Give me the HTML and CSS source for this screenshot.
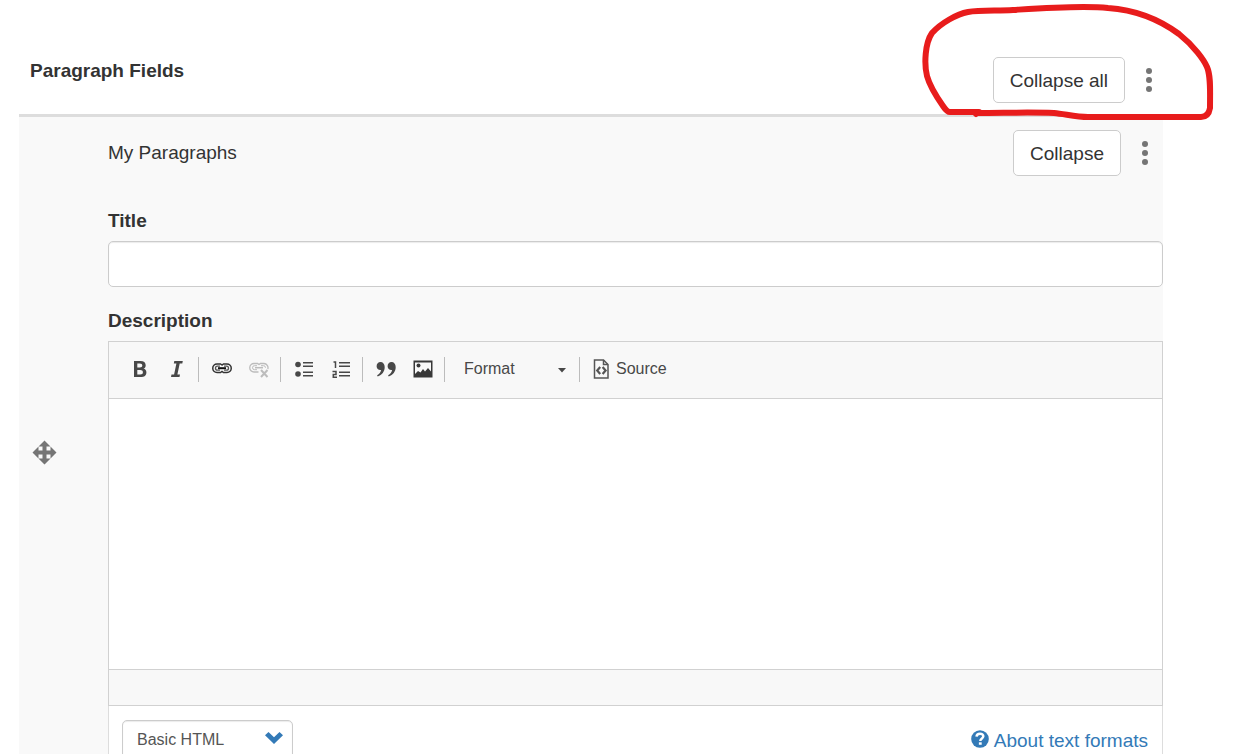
FILE: index.html
```html
<!DOCTYPE html>
<html lang="en">
<head>
    <meta charset="UTF-8">
    <meta name="viewport" content="width=device-width, initial-scale=1.0">
    <title>Paragraph Fields</title>
    <link rel="stylesheet" href="styles.css">
</head>
<body>
  <form class="page">
    <header class="field-header">
        <h4>Paragraph Fields</h4>
        <div class="actions">
            <button type="button" class="btn">Collapse all</button>
            <button type="button" class="more" aria-label="More actions">
                <svg width="8" height="26" viewBox="0 0 8 26" fill="#757575"><circle cx="4" cy="4" r="3"/><circle cx="4" cy="13" r="3"/><circle cx="4" cy="22" r="3"/></svg>
            </button>
        </div>
    </header>

    <section class="row">
        <a href="#" class="handle" aria-label="Drag to re-order">
            <svg width="25" height="25" viewBox="0 0 25 25">
                <path fill="#757575" fill-rule="evenodd" d="M12.500 0.500 24.500 12.500l-12 12-12-12zM6.500 6.500v4h4v-4zM14.500 6.500v4h4v-4zM6.500 14.500v4h4v-4zM14.500 14.500v4h4v-4z"/>
            </svg>
        </a>
        <div class="content">
            <div class="row-top">
                <span>My Paragraphs</span>
                <div class="actions">
                    <button type="button" class="btn">Collapse</button>
                    <button type="button" class="more" aria-label="More actions">
                        <svg width="8" height="26" viewBox="0 0 8 26" fill="#757575"><circle cx="4" cy="4" r="3"/><circle cx="4" cy="13" r="3"/><circle cx="4" cy="22" r="3"/></svg>
                    </button>
                </div>
            </div>

            <label for="title">Title</label>
            <input type="text" id="title" name="title" class="text-input">

            <label for="description">Description</label>
            <div class="editor">
                <div class="toolbar">
                    <button type="button" class="tool" aria-label="Bold">
                        <svg width="20" height="20" viewBox="0 0 20 20"><path fill="#484848" fill-rule="evenodd" d="M4 2h6.500c3.300 0 5.200 1.500 5.200 4.200 0 1.700-.8 2.900-2.200 3.400 1.900.5 2.900 1.900 2.900 3.800 0 3-2.100 4.600-5.700 4.600H4zM7.300 4.600v4h2.600c1.600 0 2.400-.7 2.400-2s-.8-2-2.500-2zM7.300 11.100v4.300h3c1.700 0 2.600-.7 2.600-2.200 0-1.400-.9-2.100-2.700-2.100z"/></svg>
                    </button>
                    <button type="button" class="tool" aria-label="Italic">
                        <svg width="20" height="20" viewBox="0 0 20 20"><path fill="#484848" d="M7.300 2h8.500l-.5 2.400h-2.600l-2.300 11.200H13l-.5 2.400H4l.5-2.400h2.600L9.400 4.400H6.800z"/></svg>
                    </button>
                    <span class="separator"></span>
                    <button type="button" class="tool" aria-label="Link">
                        <svg width="20" height="20" viewBox="0 0 20 20" fill="none">
                            <path stroke="#333" stroke-width="1.500" d="M10 6 8.500 5H5a4.200 4.200 0 0 0 0 8.500h3.500L10 12.500l1.500 1H15A4.200 4.200 0 0 0 15 5h-3.500z"/>
                            <path stroke="#555" stroke-width="1.300" d="M8 7.200H5.500a2 2 0 0 0 0 4H8M12 7.200h2.500a2 2 0 0 1 0 4H12"/>
                            <path stroke="#111" stroke-width="2" d="M6 9.200h8"/>
                        </svg>
                    </button>
                    <button type="button" class="tool" aria-label="Unlink">
                        <svg width="20" height="20" viewBox="0 0 20 20" fill="none" stroke="#bcbcbc">
                            <path stroke-width="1.300" d="M9.500 13H5a4.200 4.200 0 0 1 0-8.500h3.500l1.500 1 1.500-1H15a4.200 4.200 0 0 1 3.800 5.500"/>
                            <path d="M8 6.700H5.500a2 2 0 0 0 0 4H8M12 6.700h2.500a2 2 0 0 1 2 2"/>
                            <path stroke-width="1.500" d="M6 8.700h8"/>
                            <path stroke-width="2" d="m12 11 6.500 7m0-7L12 18"/>
                        </svg>
                    </button>
                    <span class="separator"></span>
                    <button type="button" class="tool" aria-label="Bulleted list">
                        <svg width="20" height="20" viewBox="0 0 20 20" fill="#484848"><circle cx="4" cy="5.500" r="2.800"/><circle cx="4" cy="15" r="2.800"/><path d="M9 3h10v1.500H9zM9 6.500h10V8H9zM9 12.500h10V14H9zM9 16h10v1.500H9z"/></svg>
                    </button>
                    <button type="button" class="tool" aria-label="Numbered list">
                        <svg width="20" height="20" viewBox="0 0 20 20" fill="none" stroke="#484848" stroke-width="1.500"><path d="M2.500 3H4.500V9M1.500 12.500H5v3H2.300V18.200H6M8 3.700h11M8 7.200h11M8 13.200h11M8 16.800h11"/></svg>
                    </button>
                    <span class="separator"></span>
                    <button type="button" class="tool" aria-label="Block quote">
                        <svg width="20" height="20" viewBox="0 0 20 20" fill="#484848"><path id="quote" d="M4.500 3C7 3 8.700 5 8.700 8c0 4.500-2.700 8-7 9.500l-.6-1.200c2.300-1.300 3.700-3.100 4-5.300-2.500.4-4.500-1.200-4.500-3.800C.6 4.700 2.200 3 4.500 3z"/><use href="#quote" x="11"/></svg>
                    </button>
                    <button type="button" class="tool" aria-label="Image">
                        <svg width="20" height="18" viewBox="0 0 20 18"><path fill="#383838" fill-rule="evenodd" d="M.5.500h19v17H.5zM2 2.500V14l3-3 2.500 1.500L10 9l2 2.500L15 8l3 3.500V2.500z"/><circle cx="5.500" cy="5.500" r="2" fill="#383838"/></svg>
                    </button>
                    <span class="separator"></span>
                    <div class="select-wrap format">
                        <select aria-label="Paragraph format"><option>Format</option></select>
                        <svg width="8" height="5" viewBox="0 0 8 5"><path fill="#474747" d="M0 0h8L4 4.500z"/></svg>
                    </div>
                    <span class="separator"></span>
                    <button type="button" class="source">
                        <svg width="16" height="20" viewBox="0 0 16 20" fill="none" stroke="#555" stroke-width="1.500"><path d="M1.500 1h9L15 5.500V19H1.500z"/><path d="M10.500 1v4.500H15"/><path stroke-width="2.200" d="M7.200 8 4.200 11.500l3 3.500M9.600 8l3 3.500-3 3.500"/></svg>
                        Source
                    </button>
                </div>
                <textarea id="description" name="description"></textarea>
                <div class="editor-bottom"></div>
            </div>

            <div class="format-bar">
                <div class="select-wrap text-format">
                    <select aria-label="Text format"><option>Basic HTML</option></select>
                    <svg width="18" height="12" viewBox="0 0 18 12"><path fill="#337ab7" d="M3.500 0 9 5.200 14.500 0 18 3.300 9 12 0 3.300z"/></svg>
                </div>
                <a href="#" class="help">
                    <svg width="18" height="18" viewBox="0 0 19 19"><circle cx="9.500" cy="9.500" r="9.300" fill="#337ab7"/><path fill="none" stroke="#fff" stroke-width="2.600" d="M5.800 7C6 4.900 7.500 4 9.500 4c2.200 0 3.500 1.100 3.500 2.700 0 2.300-3.200 2.200-3.200 5"/><path fill="#fff" d="M8.300 13h3v2.600h-3z"/></svg>
                    About text formats
                </a>
            </div>
        </div>
    </section>
  </form>

  <!-- Hand-drawn highlight around the header actions -->
  <svg class="scribble" width="300" height="130" viewBox="0 0 300 130" fill="none" stroke="#e81c1c" stroke-width="6" stroke-linecap="round" stroke-linejoin="round">
      <path d="M61 112H32C29 112 27 109 25 106C18 96 12 87 9 76C6 64 7 43 14 33C23 23 39 14 50 12C62 10 80 11 95 10C125 8 165 5 190 8C219 10 242 20 261 34C276 46 286 60 289 67C293 76 292 91 292 108C291 114 288 117 283 117H170C158 117 147 114 136 113C110 112 86 113 59 113L58 114"/>
  </svg>
</body>
</html>
```
FILE: styles.css
```css
* {
    box-sizing: border-box;
}

body {
    margin: 0;
    height: 100vh;
    overflow: hidden;
    background-color: #fff;
    color: #333;
    font-family: "Liberation Sans", Arial, sans-serif;
    font-size: 19px;
    line-height: 28px;
}

button,
select,
input,
textarea {
    font: inherit;
    color: inherit;
}

button {
    background: none;
    border: none;
    padding: 0;
    cursor: pointer;
}

a {
    color: #337ab7;
    text-decoration: none;
}

svg {
    display: block;
    flex: none;
}

.page {
    padding: 0 73px 0 19px;
}

.field-header {
    display: flex;
    justify-content: space-between;
    align-items: flex-start;
    padding: 57px 10px 11px 11px;
    border-bottom: 3px solid #ddd;
}

.field-header h4 {
    margin: 0;
    font-size: 19px;
}

.actions {
    display: flex;
    align-items: center;
    gap: 20px;
}

.btn {
    height: 46px;
    padding: 2px 16px 0;
    background-color: #fff;
    border: 1px solid #ccc;
    border-radius: 5px;
}

.row {
    display: grid;
    grid-template-columns: 89px 1fr;
    align-items: center;
    background-color: #f9f9f9;
}

.handle {
    padding-left: 13px;
}

.content {
    padding: 13px 0;
}

.row-top {
    display: flex;
    justify-content: space-between;
    align-items: center;
    padding-right: 14px;
    margin-bottom: 31px;
}

label {
    display: block;
    margin-bottom: 6px;
    font-weight: bold;
}

.text-input {
    display: block;
    width: 100%;
    height: 46px;
    margin-bottom: 20px;
    padding: 8px 16px;
    background-color: #fff;
    border: 1px solid #ccc;
    border-radius: 5px;
    box-shadow: inset 0 1px 1px rgba(0, 0, 0, 0.08);
}

/* Editor */
.editor {
    border: 1px solid #d1d1d1;
}

.toolbar {
    display: flex;
    align-items: center;
    height: 57px;
    padding: 0 12px 2px;
    background-color: #f8f8f8;
    border-bottom: 1px solid #d1d1d1;
    color: #484848;
    font-size: 16px;
}

.tool {
    display: flex;
    justify-content: center;
    align-items: center;
    width: 37px;
    height: 36px;
}

.separator {
    width: 1px;
    height: 25px;
    margin: 0 4px 0 3px;
    background-color: #bcbcbc;
}

.select-wrap {
    position: relative;
}

.select-wrap select {
    width: 100%;
    appearance: none;
    background: none;
    border: none;
}

.select-wrap svg {
    position: absolute;
    pointer-events: none;
}

.format {
    width: 127px;
}

.format select {
    padding: 0 15px;
}

.format svg {
    right: 10px;
    top: 13px;
}

.source {
    display: flex;
    align-items: center;
    gap: 7px;
    padding: 0 9px;
}

.editor textarea {
    display: block;
    width: 100%;
    height: 270px;
    padding: 20px;
    background-color: #fff;
    border: none;
    resize: none;
}

.editor-bottom {
    height: 36px;
    background-color: #f8f8f8;
    border-top: 1px solid #d1d1d1;
}

.format-bar {
    display: flex;
    justify-content: space-between;
    align-items: flex-start;
    padding: 14px 14px 14px 13px;
    background-color: #fff;
    border: 1px solid #ddd;
    border-top: none;
}

.text-format {
    width: 171px;
}

.text-format select {
    height: 40px;
    padding: 0 14px;
    background-color: #fff;
    border: 1px solid #ccc;
    border-radius: 5px;
    box-shadow: inset 0 1px 1px rgba(0, 0, 0, 0.08);
    color: #555;
    font-size: 16px;
}

.text-format svg {
    right: 10px;
    top: 12px;
}

.help {
    display: flex;
    align-items: flex-start;
    gap: 5px;
    padding-top: 7px;
}

.help svg {
    margin-top: 3px;
}

.scribble {
    position: absolute;
    top: 0;
    right: 18px;
    pointer-events: none;
}
```
